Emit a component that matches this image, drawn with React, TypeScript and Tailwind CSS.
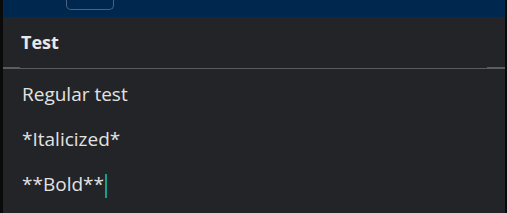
import React from "react";

export default function App() {
  return (
    <div className="w-[507px] h-[213px] bg-[#0a0a0a] flex overflow-hidden" style={{ fontFamily: '"Open Sans", "Noto Sans", sans-serif' }}>
      <div className="ml-[3px] mr-[2px] flex-1 flex flex-col bg-[#222428]">
        <div className="h-[17px] bg-[#00284f] pl-[63px] shrink-0">
          <div className="w-[48px] h-[10px] border border-t-0 border-[#4d6283] rounded-b-[5px]" />
        </div>
        <div className="h-[50px] shrink-0 pl-[18px] pt-[13px]">
          <div className="text-[18px] leading-[24px] font-bold text-[#e8e8e8]">Test</div>
        </div>
        <div className="h-[2px] flex shrink-0">
          <div className="w-[17px] h-[2px] bg-[#5a5c60]" />
          <div className="flex-1 flex flex-col">
            <div className="h-px" />
            <div className="h-px bg-[#5a5c60]" />
          </div>
          <div className="w-[18px] h-[2px] bg-[#5a5c60]" />
        </div>
        <div className="pl-[19px] pt-[11px] text-[19px] text-[#e2e2e2]">
          <div className="h-[45px] leading-[28px]">Regular test</div>
          <div className="h-[45px] leading-[28px]">*Italicized*</div>
          <div className="h-[45px] leading-[28px] flex items-start">
            <span>**Bold**</span>
            <span className="w-[2px] h-[24px] bg-[#14a08a] ml-px mt-[4px]" />
          </div>
        </div>
      </div>
    </div>
  );
}
